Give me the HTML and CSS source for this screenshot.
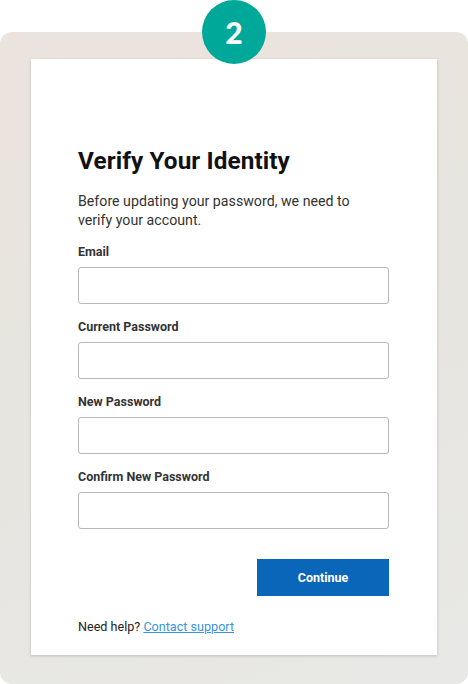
FILE: index.html
```html
<!DOCTYPE html>
<html lang="en">
<head>
<meta charset="utf-8">
<title>Verify Your Identity</title>
<link rel="stylesheet" href="styles.css">
</head>
<body>
<div class="page">
  <div class="badge">2</div>
  <div class="frame">
    <div class="card">
      <h1 class="title">Verify Your Identity</h1>
      <p class="intro">Before updating your password, we need to verify your account.</p>
      <div class="field">
        <label class="label">Email</label>
        <div class="input"></div>
      </div>
      <div class="field">
        <label class="label">Current Password</label>
        <div class="input"></div>
      </div>
      <div class="field">
        <label class="label">New Password</label>
        <div class="input"></div>
      </div>
      <div class="field">
        <label class="label">Confirm New Password</label>
        <div class="input"></div>
      </div>
      <div class="actions">
        <button class="btn">Continue</button>
      </div>
      <p class="help">Need help? <a class="link" href="#">Contact support</a></p>
    </div>
  </div>
</div>
</body>
</html>
```

FILE: styles.css
```css
* { box-sizing: border-box; }
html, body { margin: 0; padding: 0; background: #ffffff; }
body { font-family: Roboto, "Liberation Sans", sans-serif; width: 468px; height: 684px; overflow: hidden; }

.page { position: relative; padding-top: 32px; }

.badge {
  position: absolute;
  top: 0;
  left: 202px;
  width: 64px;
  height: 64px;
  border-radius: 50%;
  background: #00a89a;
  color: #ffffff;
  font-family: Lato, "Open Sans", sans-serif;
  font-weight: 900;
  font-size: 30px;
  display: flex;
  align-items: center;
  justify-content: center;
  z-index: 2;
}

.frame {
  height: 652px;
  border-radius: 12px;
  background: linear-gradient(160deg, #ece3dd 0%, #e6e5df 45%, #e8e8e6 100%);
  padding: 27px 31px 0 31px;
}

.card {
  background: #ffffff;
  height: 596px;
  padding: 89px 48px 0 47px;
  box-shadow: 0 1px 3px rgba(0,0,0,0.18);
  display: flex;
  flex-direction: column;
}

.title {
  margin: 0;
  font-size: 24.3px;
  line-height: 26px;
  font-weight: 700;
  color: #111111;
  letter-spacing: 0.1px;
}

.intro {
  margin: 18px 0 0 0;
  max-width: 290px;
  font-size: 14.2px;
  line-height: 19px;
  color: #333333;
}

.field { display: flex; flex-direction: column; margin-top: 14px; }
.field + .field { margin-top: 15px; }

.label {
  font-size: 12.5px;
  line-height: 16px;
  font-weight: 700;
  color: #333333;
}

.input {
  margin-top: 7px;
  height: 37px;
  border: 1px solid #b8b8b8;
  border-radius: 3px;
  background: #ffffff;
}

.actions { display: flex; justify-content: flex-end; margin-top: 30px; }

.btn {
  width: 132px;
  height: 37px;
  border: none;
  border-radius: 0;
  background: #0a66b8;
  color: #ffffff;
  font-family: Roboto, "Liberation Sans", sans-serif;
  font-size: 12.5px;
  font-weight: 700;
  padding: 0;
}

.help {
  margin: 23px 0 0 0;
  font-size: 12.6px;
  line-height: 16px;
  color: #222222;
}

.link { color: #3a94de; text-decoration: underline; }
```
